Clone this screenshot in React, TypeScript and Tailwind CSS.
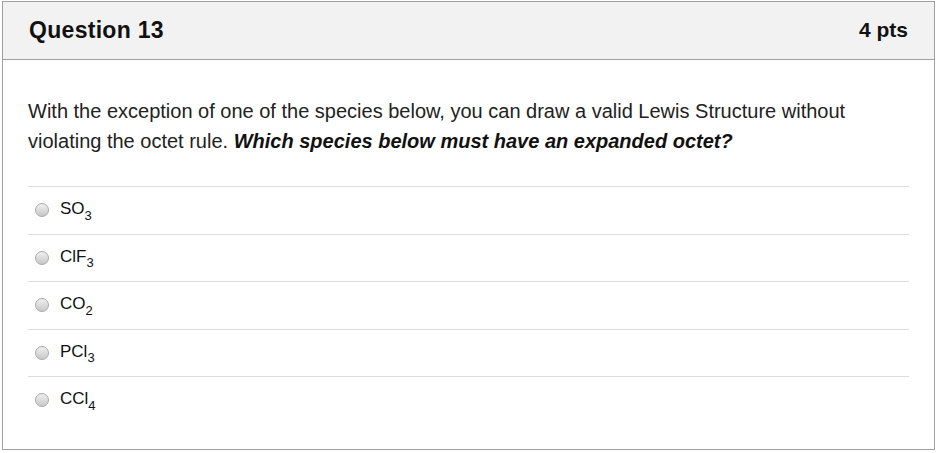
const options: { base: string; sub: string }[] = [
  { base: "SO", sub: "3" },
  { base: "ClF", sub: "3" },
  { base: "CO", sub: "2" },
  { base: "PCl", sub: "3" },
  { base: "CCl", sub: "4" },
];

function Radio() {
  return (
    <span className="inline-block w-[14px] h-[14px] rounded-full border border-[#a8a8a8] bg-gradient-to-b from-[#f0f0f0] to-[#c8c8c8] shrink-0" />
  );
}

export default function App() {
  return (
    <div className="w-[938px] h-[453px] bg-white pt-[1px] pl-[2px] font-['Liberation_Sans',Arial,sans-serif] text-[#111]">
      <div className="w-[933px] h-[449px] border border-[#a0a0a0] flex flex-col">
        <div className="h-[58px] shrink-0 bg-[#f2f2f2] border-b border-[#a0a0a0] flex items-center justify-between px-[26px]">
          <h2 className="text-[23px] font-bold tracking-[0.3px] -mt-[1px]">Question 13</h2>
          <span className="text-[21px] font-bold -mt-[1px]">4 pts</span>
        </div>
        <div className="px-[25px] pt-[36px]">
          <p className="text-[20px] leading-[30px] text-[#222]">
            With the exception of one of the species below, you can draw a valid Lewis Structure without
            <br />
            violating the octet rule.{" "}
            <strong className="italic font-bold text-[#111]">
              Which species below must have an expanded octet?
            </strong>
          </p>
          <div className="mt-[30px]">
            {options.map((o) => (
              <label
                key={o.base}
                className="h-[47.5px] border-t border-[#dcdcdc] flex items-center gap-[11px] pl-[7px]"
              >
                <Radio />
                <span className="text-[17px] leading-[20px] text-[#111] -mt-[2px]">
                  {o.base}
                  <sub className="text-[13px] leading-none align-[-2px]">{o.sub}</sub>
                </span>
              </label>
            ))}
          </div>
        </div>
      </div>
    </div>
  );
}
